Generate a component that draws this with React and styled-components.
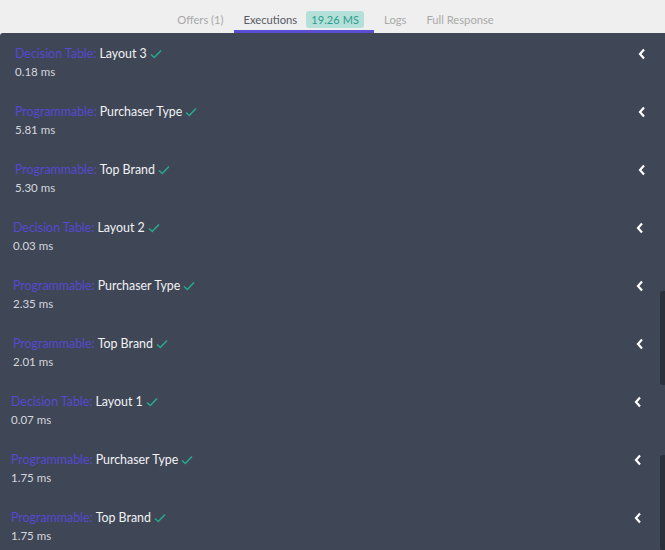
import React from "react";
import styled, { createGlobalStyle } from "styled-components";

const Global = createGlobalStyle`
  html, body { margin: 0; padding: 0; background: #efefef; }
  body { font-family: Lato, "Noto Sans", sans-serif; }
`;

const Page = styled.div`
  width: 665px;
  height: 550px;
  display: flex;
  flex-direction: column;
  overflow: hidden;
`;

const TabBar = styled.nav`
  height: 33px;
  flex: none;
  display: flex;
  justify-content: center;
  align-items: stretch;
  background: #efefef;
  padding-left: 6px;
  box-sizing: border-box;
`;

const Tab = styled.div`
  display: flex;
  align-items: center;
  gap: 9px;
  padding: 8px 10px 0;
  font-size: 11.2px;
  color: ${(p) => (p.$active ? "#555a66" : "#a9a9a9")};
  border-bottom: 3px solid ${(p) => (p.$active ? "#5a4fd3" : "transparent")};
`;

const Badge = styled.span`
  background: #b5e0d9;
  color: #2a9e8c;
  border-radius: 3px;
  padding: 2px 5px;
  font-size: 11px;
  letter-spacing: 0.1px;
`;

const Panel = styled.div`
  flex: 1;
  display: flex;
  background: #3f4656;
  border-top-left-radius: 3px;
  min-height: 0;
`;

const List = styled.div`
  flex: 1;
  min-width: 0;
`;

const Group = styled.div`
  margin-left: ${(p) => (p.$nested ? "-2px" : "0")};
  margin-right: ${(p) => (p.$nested ? "2px" : "0")};
`;

const Row = styled.div`
  display: flex;
  align-items: flex-start;
  padding: 12px 14px 10px 15px;
  height: 58px;
  box-sizing: border-box;
`;

const Info = styled.div`
  flex: 1;
  display: flex;
  flex-direction: column;
`;

const Title = styled.div`
  display: flex;
  align-items: center;
  font-size: 12.4px;
  line-height: 18px;
  color: #f1f2f4;
`;

const Kind = styled.span`
  color: #5649d2;
  margin-right: 3px;
`;

const Check = styled.svg`
  margin-left: 3px;
  width: 12px;
  height: 10px;
`;

const Time = styled.div`
  font-size: 11.5px;
  line-height: 18px;
  color: #d4d7de;
`;

const Chevron = styled.svg`
  width: 8px;
  height: 12px;
  margin-top: 3px;
`;

const Track = styled.div`
  width: 5px;
  flex: none;
  display: flex;
  flex-direction: column;
`;

const Gap = styled.div`
  height: ${(p) => p.$h}px;
  flex: none;
`;

const Thumb = styled.div`
  height: ${(p) => p.$h}px;
  flex: none;
  background: #2b303c;
  border-radius: 2px 0 0 2px;
`;

const groups = [
  ["Layout 3", "0.18 ms", "5.81 ms", "5.30 ms"],
  ["Layout 2", "0.03 ms", "2.35 ms", "2.01 ms"],
  ["Layout 1", "0.07 ms", "1.75 ms", "1.75 ms"],
];

function Item({ kind, name, time }) {
  return (
    <Row>
      <Info>
        <Title>
          <Kind>{kind}:</Kind>
          {name}
          <Check viewBox="0 0 12 10">
            <path d="M1 5.5 L4.3 8.5 L11 1.5" fill="none" stroke="#27a98b" strokeWidth="1.6" />
          </Check>
        </Title>
        <Time>{time}</Time>
      </Info>
      <Chevron viewBox="0 0 8 12">
        <path d="M6 1.5 L2 6 L6 10.5" fill="none" stroke="#ffffff" strokeWidth="2.2" strokeLinejoin="miter" />
      </Chevron>
    </Row>
  );
}

function Nest({ level }) {
  const [layout, t1, t2, t3] = groups[level];
  return (
    <Group $nested={level > 0}>
      <Item kind="Decision Table" name={layout} time={t1} />
      <Item kind="Programmable" name="Purchaser Type" time={t2} />
      <Item kind="Programmable" name="Top Brand" time={t3} />
      {level < groups.length - 1 && <Nest level={level + 1} />}
    </Group>
  );
}

export default function App() {
  return (
    <Page>
      <Global />
      <TabBar>
        <Tab>Offers (1)</Tab>
        <Tab $active>
          Executions <Badge>19.26 MS</Badge>
        </Tab>
        <Tab>Logs</Tab>
        <Tab>Full Response</Tab>
      </TabBar>
      <Panel>
        <List>
          <Nest level={0} />
        </List>
        <Track>
          <Gap $h={258} />
          <Thumb $h={94} />
          <Gap $h={70} />
          <Thumb $h={95} />
        </Track>
      </Panel>
    </Page>
  );
}
